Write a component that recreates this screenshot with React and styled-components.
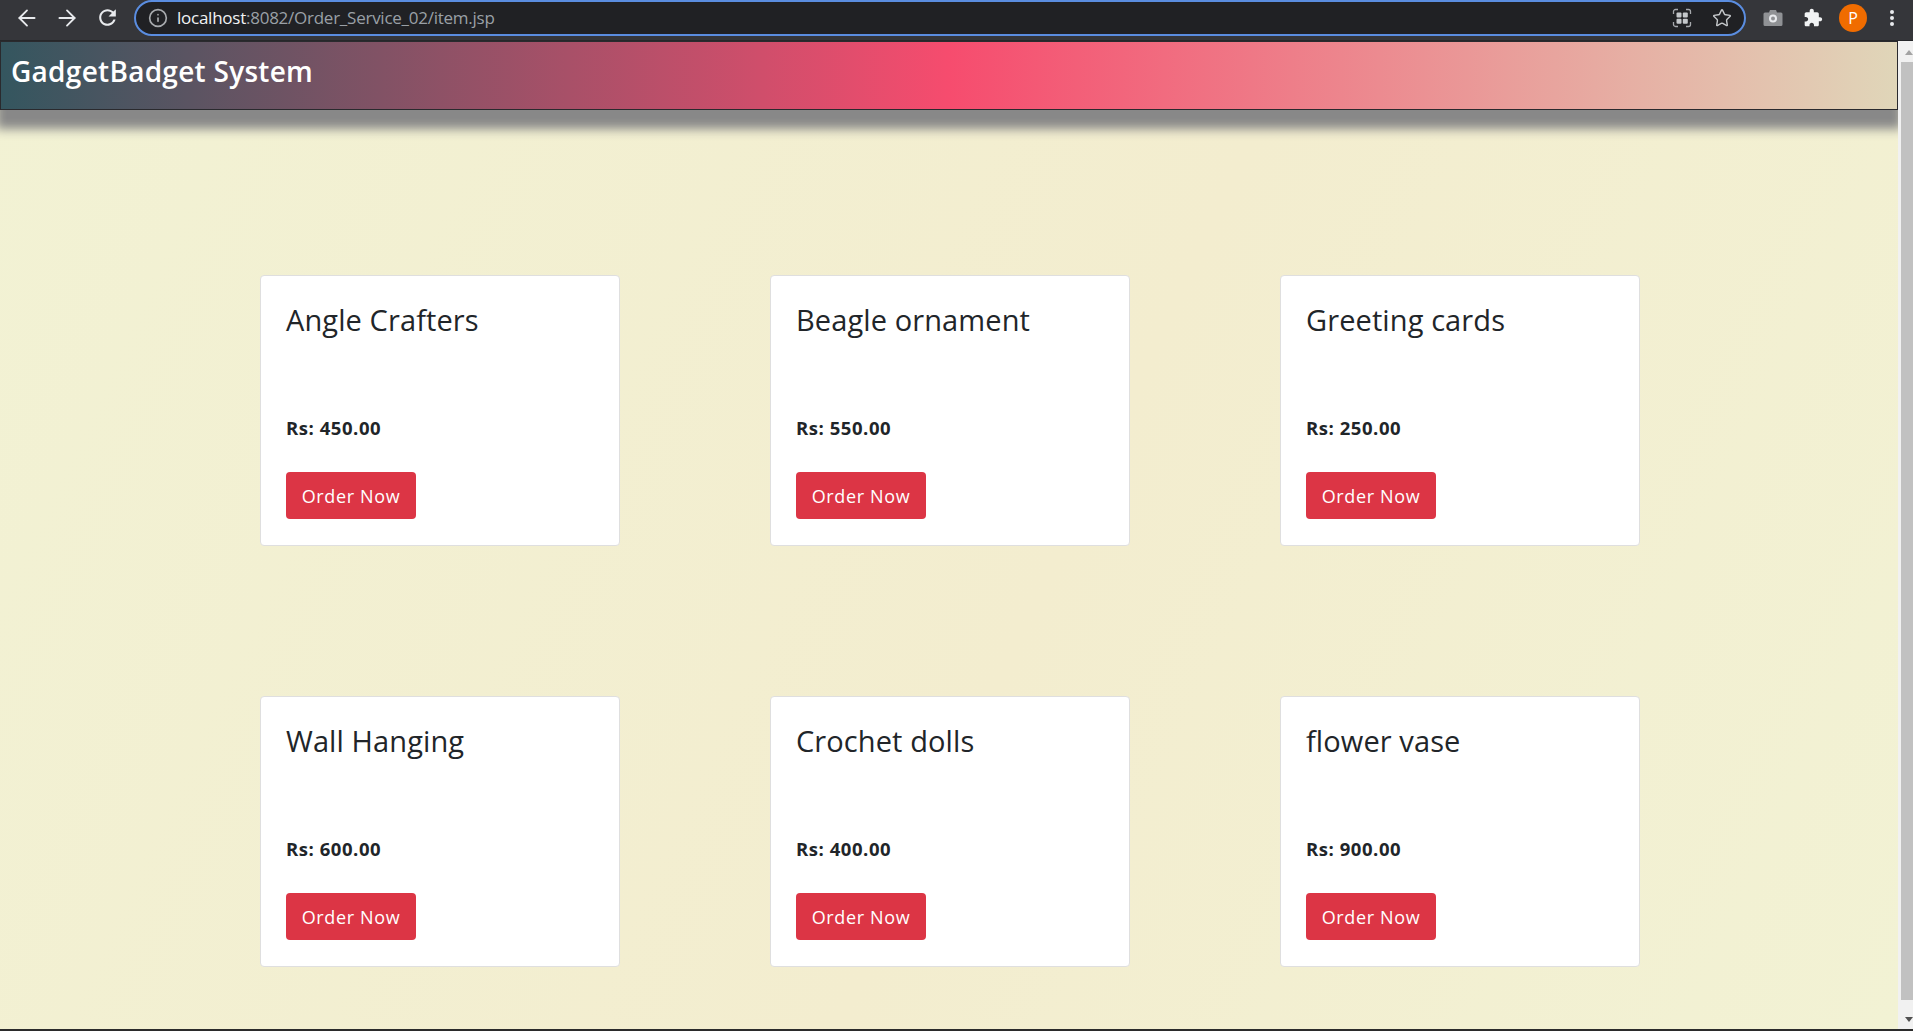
import React from "react";
import styled, { createGlobalStyle } from "styled-components";
import { ArrowLeft, ArrowRight, Info, Star } from "lucide-react";

const GlobalStyle = createGlobalStyle`
  html, body {
    margin: 0;
    padding: 0;
    height: 100%;
    overflow: hidden;
  }
  * {
    box-sizing: border-box;
  }
`;

const Window = styled.div`
  display: flex;
  flex-direction: column;
  width: 1913px;
  height: 1031px;
  overflow: hidden;
  background: #202124;
  font-family: "Open Sans", "Noto Sans", sans-serif;
`;

const Toolbar = styled.div`
  display: flex;
  align-items: center;
  height: 41px;
  flex-shrink: 0;
  background: #35363a;
  border-bottom: 1px solid #26272a;
  padding: 0 0 5px 15px;
  color: #e8eaed;
`;

const NavButton = styled.div`
  display: flex;
  align-items: center;
  justify-content: center;
  flex-shrink: 0;
  width: 24px;
  height: 24px;
  margin-right: ${(props) => props.gap || 16}px;

  svg {
    flex-shrink: 0;
  }
`;

const AddressBar = styled.div`
  display: flex;
  align-items: center;
  flex-shrink: 0;
  width: 1612px;
  height: 36px;
  margin-left: 5px;
  padding: 0 11px 0 12px;
  border: 2px solid #5a8de0;
  border-radius: 18px;
  background: #202124;
`;

const Url = styled.div`
  flex: 1;
  margin-left: 9px;
  font-family: "Open Sans", sans-serif;
  font-size: 17px;
  letter-spacing: -0.25px;
  color: #9aa0a6;
`;

const Host = styled.span`
  color: #f1f3f4;
`;

const BarIcon = styled.div`
  display: flex;
  align-items: center;
  justify-content: center;
  width: 22px;
  margin-left: ${(props) => props.gap || 0}px;
  color: #c4c7ca;
`;

const Avatar = styled.div`
  display: flex;
  align-items: center;
  justify-content: center;
  width: 28px;
  height: 28px;
  border-radius: 50%;
  margin-left: 15px;
  background: #f06c00;
  color: #fff;
  font-size: 16px;
`;

const Dots = styled.div`
  display: flex;
  flex-direction: column;
  gap: 2px;
  margin-left: 23px;
`;

const Dot = styled.span`
  width: 4px;
  height: 4px;
  border-radius: 50%;
  background: #e8eaed;
`;

const Viewport = styled.div`
  display: flex;
  flex: 1;
  min-height: 0;
`;

const Page = styled.div`
  flex: 1;
  min-width: 0;
  overflow: hidden;
  background: linear-gradient(115deg, #f2f2d4 0%, #f3edcf 55%, #f2f2d4 100%);
`;

const Header = styled.header`
  display: flex;
  align-items: center;
  height: 69px;
  padding: 0 0 10px 10px;
  background: linear-gradient(90deg, #34565f 0%, #f64c6e 50%, #e0d6b9 100%);
  border: 1px solid #2a2a2e;
  box-shadow: 0 15px 10px 4px #888;
`;

const Brand = styled.h1`
  margin: 0;
  font-size: 28px;
  font-weight: 600;
  letter-spacing: 0.28px;
  color: #fff;
`;

const Grid = styled.div`
  display: grid;
  grid-template-columns: repeat(3, 360px);
  column-gap: 150px;
  row-gap: 150px;
  padding: 165px 0 0 260px;
`;

const Card = styled.div`
  display: flex;
  flex-direction: column;
  align-items: flex-start;
  height: 271px;
  padding: 27px 25px 0;
  background: #fff;
  border: 1px solid #dfdfdf;
  border-radius: 4px;
`;

const Title = styled.h3`
  margin: 0;
  height: 113px;
  font-size: 29px;
  font-weight: 400;
  line-height: 34px;
  letter-spacing: 0.1px;
  color: #212529;
`;

const Price = styled.p`
  margin: 0;
  height: 56px;
  font-size: 18.5px;
  font-weight: 700;
  line-height: 24px;
  letter-spacing: 0.55px;
  color: #212529;
`;

const OrderButton = styled.button`
  width: 130px;
  height: 47px;
  padding: 0;
  border: none;
  border-radius: 4px;
  background: #dc3545;
  color: #fff;
  font-family: inherit;
  font-size: 18px;
  letter-spacing: 0.65px;
`;

const Scrollbar = styled.div`
  display: flex;
  flex-direction: column;
  width: 15px;
  flex-shrink: 0;
  background: #f1f1f1;
`;

const ScrollThumb = styled.div`
  flex: 1;
  margin: 7px 0 0 3px;
  background: #c1c1c1;
`;

const ScrollArrow = styled.span`
  width: 0;
  height: 0;
  margin: ${(props) => (props.up ? "9px 0 0 7px" : "17px 0 7px 7px")};
  border-left: 4px solid transparent;
  border-right: 4px solid transparent;
  ${(props) =>
    props.up ? "border-bottom: 5px solid #a3a3a3;" : "border-top: 5px solid #505050;"}
`;

const BottomLine = styled.div`
  height: 2px;
  flex-shrink: 0;
  background: #2b2b2b;
`;

const items = [
  { name: "Angle Crafters", price: "450.00" },
  { name: "Beagle ornament", price: "550.00" },
  { name: "Greeting cards", price: "250.00" },
  { name: "Wall Hanging", price: "600.00" },
  { name: "Crochet dolls", price: "400.00" },
  { name: "flower vase", price: "900.00" },
];

function ReloadIcon() {
  return (
    <svg width="25" height="25" viewBox="0 0 24 24" fill="#e8eaed">
      <path d="M17.65 6.35C16.2 4.9 14.21 4 12 4c-4.42 0-7.99 3.58-7.99 8s3.57 8 7.99 8c3.73 0 6.84-2.55 7.73-6h-2.08c-.82 2.33-3.04 4-5.65 4-3.31 0-6-2.69-6-6s2.69-6 6-6c1.66 0 3.14.69 4.22 1.78L13 11h7V4l-2.35 2.35z" />
    </svg>
  );
}

function PuzzleIcon() {
  return (
    <svg width="20" height="20" viewBox="0 0 24 24" fill="#f1f3f4">
      <path d="M20.5 11H19V7c0-1.1-.9-2-2-2h-4V3.5C13 2.12 11.88 1 10.5 1S8 2.12 8 3.5V5H4c-1.1 0-1.99.9-1.99 2v3.8H3.5c1.49 0 2.7 1.21 2.7 2.7s-1.21 2.7-2.7 2.7H2V20c0 1.1.9 2 2 2h3.8v-1.5c0-1.49 1.21-2.7 2.7-2.7 1.49 0 2.7 1.21 2.7 2.7V22H17c1.1 0 2-.9 2-2v-4h1.5c1.38 0 2.5-1.12 2.5-2.5S21.88 11 20.5 11z" />
    </svg>
  );
}

function QrIcon() {
  return (
    <svg width="20" height="20" viewBox="0 0 20 20" fill="none">
      <path
        d="M1.500 6V3.500a2 2 0 0 1 2-2H6M14 1.500h2.500a2 2 0 0 1 2 2V6M18.500 14v2.500a2 2 0 0 1-2 2H14M6 18.500H3.500a2 2 0 0 1-2-2V14"
        stroke="#a6a9ac"
        strokeWidth="1.300"
      />
      <rect x="4.500" y="4.500" width="5" height="5" rx="1" fill="#c4c7ca" />
      <rect x="10.800" y="4.500" width="5" height="5" rx="1" fill="#c4c7ca" />
      <rect x="4.500" y="10.800" width="5" height="5" rx="1" fill="#c4c7ca" />
      <rect x="10.800" y="10.800" width="5" height="5" rx="1" fill="#c4c7ca" />
    </svg>
  );
}

function CameraIcon() {
  return (
    <svg width="20" height="18" viewBox="0 0 20 18">
      <path
        d="M2 3.500h4L7 1h6l1 2.500h4a1.500 1.500 0 0 1 1.500 1.500v10.500A1.500 1.500 0 0 1 18 17H2a1.500 1.500 0 0 1-1.500-1.500V5A1.500 1.500 0 0 1 2 3.500z"
        fill="#909295"
      />
      <circle cx="10" cy="9.500" r="4" fill="#e8eaed" />
      <circle cx="10" cy="9.500" r="2" fill="#909295" />
    </svg>
  );
}

function App() {
  return (
    <Window>
      <GlobalStyle />
      <Toolbar>
        <NavButton>
          <ArrowLeft size={26} strokeWidth={1.7} />
        </NavButton>
        <NavButton>
          <ArrowRight size={26} strokeWidth={1.7} />
        </NavButton>
        <NavButton gap={10}>
          <ReloadIcon />
        </NavButton>
        <AddressBar>
          <Info size={20} strokeWidth={2} color="#a8abae" />
          <Url>
            <Host>localhost</Host>:8082/Order_Service_02/item.jsp
          </Url>
          <BarIcon>
            <QrIcon />
          </BarIcon>
          <BarIcon gap={18}>
            <Star size={20} strokeWidth={1.7} />
          </BarIcon>
        </AddressBar>
        <BarIcon gap={16}>
          <CameraIcon />
        </BarIcon>
        <BarIcon gap={18}>
          <PuzzleIcon />
        </BarIcon>
        <Avatar>P</Avatar>
        <Dots>
          <Dot />
          <Dot />
          <Dot />
        </Dots>
      </Toolbar>
      <Viewport>
        <Page>
          <Header>
            <Brand>GadgetBadget System</Brand>
          </Header>
          <Grid>
            {items.map((item) => (
              <Card key={item.name}>
                <Title>{item.name}</Title>
                <Price>Rs: {item.price}</Price>
                <OrderButton>Order Now</OrderButton>
              </Card>
            ))}
          </Grid>
        </Page>
        <Scrollbar>
          <ScrollArrow up />
          <ScrollThumb />
          <ScrollArrow />
        </Scrollbar>
      </Viewport>
      <BottomLine />
    </Window>
  );
}

export default App;
